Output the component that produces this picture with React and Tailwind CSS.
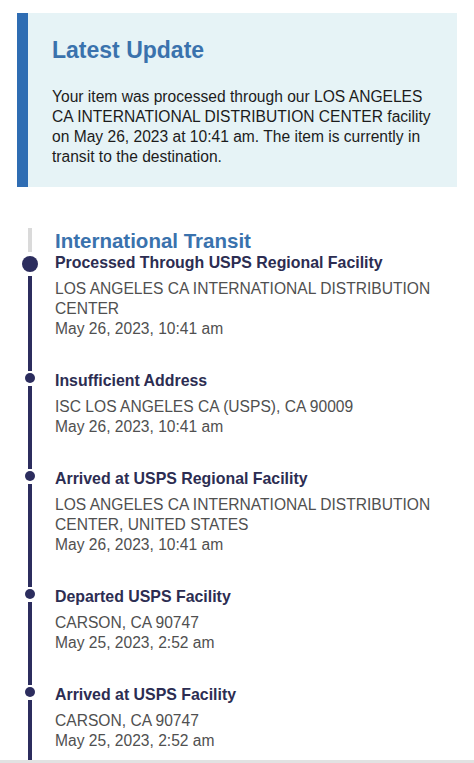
import React from 'react';

const events = [
  {
    title: 'Insufficient Address',
    lines: ['ISC LOS ANGELES CA (USPS), CA 90009', 'May 26, 2023, 10:41 am'],
  },
  {
    title: 'Arrived at USPS Regional Facility',
    lines: [
      'LOS ANGELES CA INTERNATIONAL DISTRIBUTION',
      'CENTER, UNITED STATES',
      'May 26, 2023, 10:41 am',
    ],
  },
  {
    title: 'Departed USPS Facility',
    lines: ['CARSON, CA 90747', 'May 25, 2023, 2:52 am'],
  },
  {
    title: 'Arrived at USPS Facility',
    lines: ['CARSON, CA 90747', 'May 25, 2023, 2:52 am'],
  },
];

function EventText({ title, lines }) {
  return (
    <div className="flex-1 pb-[32px]">
      <div className="text-[15.9px] leading-[20px] font-bold text-[#2c2d52]">{title}</div>
      <div className="mt-[6px] text-[15.6px] leading-[20px] text-[#505050]">
        {lines.map((l) => (
          <div key={l}>{l}</div>
        ))}
      </div>
    </div>
  );
}

function App() {
  return (
    <div
      className="h-[763px] overflow-hidden flex flex-col bg-white"
      style={{ fontFamily: '"Liberation Sans", Arial, sans-serif' }}
    >
      <div className="flex-1 overflow-hidden pt-[13px]">
        {/* Latest update card */}
        <div className="mx-[17px] flex bg-[#e6f3f6]">
          <div className="w-[11px] bg-[#2f6db3]" />
          <div className="flex-1 pl-[24px] pr-[14px] pt-[23px] pb-[20px]">
            <h2 className="text-[23px] leading-[28px] font-bold text-[#3a72ad]">Latest Update</h2>
            <p className="mt-[23px] text-[15.6px] leading-[20px] text-[#1c1c1c]">
              Your item was processed through our LOS ANGELES CA INTERNATIONAL DISTRIBUTION CENTER
              facility on May 26, 2023 at 10:41 am. The item is currently in transit to the
              destination.
            </p>
          </div>
        </div>

        {/* Timeline */}
        <div className="mt-[41px]">
          <div className="flex">
            <div className="w-[55px] shrink-0">
              <div className="ml-[22px] w-[16px] flex justify-center">
                <div className="w-[4px] h-[24px] bg-[#dadada]" />
              </div>
            </div>
            <div className="text-[20.5px] leading-[25px] font-bold text-[#3a72ad]">
              International Transit
            </div>
          </div>

          <div className="flex">
            <div className="w-[55px] shrink-0 flex">
              <div className="ml-[22px] w-[16px] flex flex-col items-center">
                <div className="mt-[3px] w-[16px] h-[16px] rounded-full bg-[#2c2d5e]" />
                <div className="mt-[4px] w-[4px] flex-1 bg-[#2c2d5e]" />
              </div>
            </div>
            <EventText
              title="Processed Through USPS Regional Facility"
              lines={[
                'LOS ANGELES CA INTERNATIONAL DISTRIBUTION',
                'CENTER',
                'May 26, 2023, 10:41 am',
              ]}
            />
          </div>

          {events.map((e) => (
            <div key={e.title} className="flex">
              <div className="w-[55px] shrink-0 flex">
                <div className="ml-[22px] w-[16px] flex flex-col items-center">
                  <div className="mt-[2px] w-[10px] h-[10px] rounded-full bg-[#2c2d5e]" />
                  <div className="mt-[3px] w-[4px] flex-1 bg-[#2c2d5e]" />
                </div>
              </div>
              <EventText title={e.title} lines={e.lines} />
            </div>
          ))}
        </div>
      </div>
      <div className="h-[3px] bg-[#e2e2e2]" />
    </div>
  );
}

export default App;
